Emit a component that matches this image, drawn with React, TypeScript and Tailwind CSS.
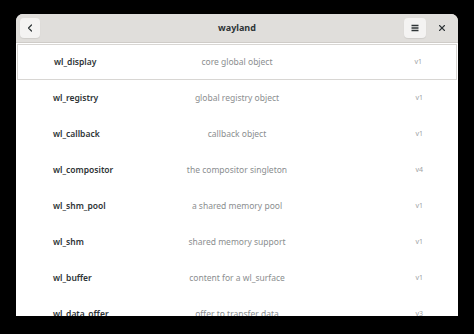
import { ChevronLeft, X } from "lucide-react";

const interfaces = [
  { name: "wl_display", summary: "core global object", version: "v1" },
  { name: "wl_registry", summary: "global registry object", version: "v1" },
  { name: "wl_callback", summary: "callback object", version: "v1" },
  { name: "wl_compositor", summary: "the compositor singleton", version: "v4" },
  { name: "wl_shm_pool", summary: "a shared memory pool", version: "v1" },
  { name: "wl_shm", summary: "shared memory support", version: "v1" },
  { name: "wl_buffer", summary: "content for a wl_surface", version: "v1" },
  { name: "wl_data_offer", summary: "offer to transfer data", version: "v3" },
];

function MenuIcon() {
  return (
    <svg width="10" height="10" viewBox="0 0 10 10" fill="none">
      <path d="M1.5 2.5h7M1.5 5h7M1.5 7.5h7" stroke="#2e3436" strokeWidth="1.3" />
    </svg>
  );
}

export default function App() {
  return (
    <div
      className="h-[334px] w-[474px] overflow-hidden bg-black pl-[16px] pt-[14px]"
      style={{ fontFamily: '"Noto Sans", "Open Sans", sans-serif' }}
    >
      <div className="flex h-[302px] w-[442px] flex-col overflow-hidden rounded-t-[7px] bg-white">
        <header className="flex h-[29px] shrink-0 items-center border-b border-[#cfccc8] bg-[#e0dedb] px-[4px]">
          <button className="flex h-[20px] w-[20px] items-center justify-center rounded-[4px] bg-[#f4f3f2] shadow-[0_1px_1px_rgba(0,0,0,0.08)]">
            <ChevronLeft size={12} strokeWidth={2.4} color="#2e3436" />
          </button>
          <div className="flex-1 pl-[30px] text-center text-[9px] font-bold text-[#2e3436]">wayland</div>
          <button className="flex h-[20px] w-[22px] items-center justify-center rounded-[4px] bg-[#f4f3f2] shadow-[0_1px_1px_rgba(0,0,0,0.08)]">
            <MenuIcon />
          </button>
          <button className="ml-[6px] mr-[2px] flex h-[20px] w-[20px] items-center justify-center">
            <X size={10} strokeWidth={2.6} color="#2e3436" />
          </button>
        </header>
        <ul className="flex flex-col pt-px">
          {interfaces.map((item, i) => (
            <li
              key={item.name}
              className={`grid h-[36px] shrink-0 grid-cols-[1fr_180px_1fr] items-center ${
                i === 0 ? "mx-px border border-[#d8d6d3]" : ""
              }`}
            >
              <span className={`text-[8.5px] font-semibold text-[#2e3436] ${i === 0 ? "pl-[36px]" : "pl-[37px]"}`}>
                {item.name}
              </span>
              <span className="text-center text-[8.5px] text-[#8b8e8f]">{item.summary}</span>
              <span className={`text-right text-[7px] text-[#a0a3a4] ${i === 0 ? "pr-[34px]" : "pr-[35px]"}`}>
                {item.version}
              </span>
            </li>
          ))}
        </ul>
      </div>
    </div>
  );
}
